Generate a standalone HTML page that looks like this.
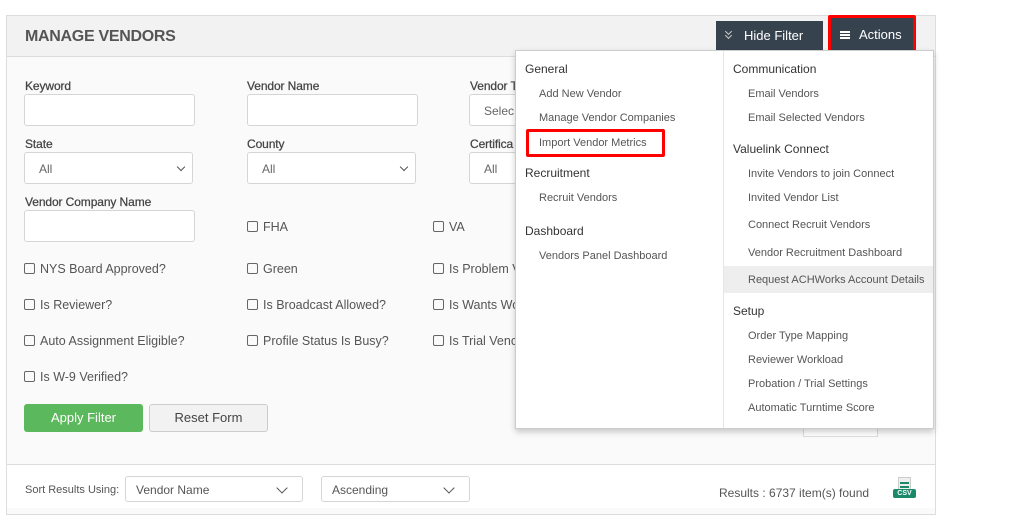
<!DOCTYPE html>
<html><head><meta charset="utf-8"><style>
*{box-sizing:border-box;margin:0;padding:0}
body{width:1024px;height:508px;background:#fff;font-family:"Liberation Sans",sans-serif;position:relative;overflow:hidden;color:#555}
.a{position:absolute;white-space:nowrap}
.lbl{font-size:12px;color:#444;letter-spacing:-0.1px;-webkit-text-stroke:0.25px #444}
.inp{position:absolute;border:1px solid #d5d5d5;border-radius:3px;background:#fff;height:32px}
.sel{font-size:12px;color:#666;padding:9px 14px}
.chev{position:absolute;right:8px;top:11px;width:6px;height:6px;border-right:1.5px solid #555;border-bottom:1.5px solid #555;transform:rotate(45deg)}
.cb{font-size:12.5px;color:#555}
.cb i{display:inline-block;width:11px;height:11px;border:1px solid #666;border-radius:2px;vertical-align:-1px;margin-right:5px}
.mh{font-size:12px;color:#333}
.mi{font-size:11px;color:#555}
</style></head><body>
<div class="a" style="left:6px;top:15px;width:930px;height:500px;border:1px solid #ddd;background:#fafafa"></div>
<div class="a" style="left:7px;top:16px;width:928px;height:41px;background:#f2f2f2;border-bottom:1px solid #ddd"></div>
<div class="a" style="left:25px;top:28px;font-size:16px;color:#555;font-weight:bold;letter-spacing:-0.3px">MANAGE VENDORS</div>

<div class="a lbl" style="left:25px;top:79px">Keyword</div>
<div class="inp" style="left:24px;top:94px;width:171px"></div>
<div class="a lbl" style="left:247px;top:79px">Vendor Name</div>
<div class="inp" style="left:247px;top:94px;width:171px"></div>
<div class="a lbl" style="left:470px;top:79px">Vendor T</div>
<div class="inp sel" style="left:469px;top:94px;width:60px;padding-left:14px">Selec</div>

<div class="a lbl" style="left:25px;top:137px">State</div>
<div class="inp sel" style="left:24px;top:152px;width:169px">All<span class="chev"></span></div>
<div class="a lbl" style="left:247px;top:137px">County</div>
<div class="inp sel" style="left:247px;top:152px;width:169px">All<span class="chev"></span></div>
<div class="a lbl" style="left:470px;top:137px">Certifica</div>
<div class="inp sel" style="left:469px;top:152px;width:60px">All</div>

<div class="a lbl" style="left:25px;top:195px">Vendor Company Name</div>
<div class="inp" style="left:24px;top:210px;width:171px"></div>
<div class="a cb" style="left:247px;top:220px"><i></i>FHA</div>
<div class="a cb" style="left:433px;top:220px"><i></i>VA</div>

<div class="a cb" style="left:24px;top:262px"><i></i>NYS Board Approved?</div>
<div class="a cb" style="left:247px;top:262px"><i></i>Green</div>
<div class="a cb" style="left:433px;top:262px"><i></i>Is Problem V</div>
<div class="a cb" style="left:24px;top:298px"><i></i>Is Reviewer?</div>
<div class="a cb" style="left:247px;top:298px"><i></i>Is Broadcast Allowed?</div>
<div class="a cb" style="left:433px;top:298px"><i></i>Is Wants Wo</div>
<div class="a cb" style="left:24px;top:334px"><i></i>Auto Assignment Eligible?</div>
<div class="a cb" style="left:247px;top:334px"><i></i>Profile Status Is Busy?</div>
<div class="a cb" style="left:433px;top:334px"><i></i>Is Trial Venc</div>
<div class="a cb" style="left:24px;top:370px"><i></i>Is W-9 Verified?</div>

<div class="a" style="left:24px;top:404px;width:119px;height:28px;background:#5cb85c;border-radius:3px;color:#fff;font-size:13px;text-align:center;line-height:28px">Apply Filter</div>
<div class="a" style="left:149px;top:404px;width:119px;height:28px;background:#f2f2f2;border:1px solid #ccc;border-radius:3px;color:#444;font-size:13px;text-align:center;line-height:26px">Reset Form</div>
<div class="a" style="left:803px;top:420px;width:75px;height:17px;border:1px solid #ddd;background:#fff"></div>

<div class="a" style="left:7px;top:464px;width:928px;height:44px;background:#fff;border-top:1px solid #ddd"></div>
<div class="a" style="left:25px;top:484px;font-size:11px;color:#555">Sort Results Using:</div>
<div class="inp" style="left:125px;top:476px;width:178px;height:26px;font-size:12px;padding:6px 10px">Vendor Name<span class="chev" style="right:16px;top:7px;width:8px;height:8px;border-width:1.3px"></span></div>
<div class="inp" style="left:321px;top:476px;width:149px;height:26px;font-size:12px;padding:6px 10px">Ascending<span class="chev" style="right:16px;top:7px;width:8px;height:8px;border-width:1.3px"></span></div>
<div class="a" style="left:719px;top:486px;font-size:12px;color:#555">Results : 6737 item(s) found</div>
<div class="a" style="left:893px;top:477px;width:23px;height:22px">
<div style="position:absolute;left:5px;top:0;width:13px;height:14px;background:#eee;border:1px solid #ccc"></div>
<div style="position:absolute;left:7px;top:5px;width:9px;height:2px;background:#1a8a6a"></div>
<div style="position:absolute;left:7px;top:9px;width:9px;height:2px;background:#1a8a6a"></div>
<div style="position:absolute;left:0;top:12px;width:23px;height:9px;background:#1a8a6a;border-radius:2px;color:#fff;font-size:7px;font-weight:bold;text-align:center;line-height:9px">CSV</div></div>

<div class="a" style="left:716px;top:21px;width:107px;height:30px;background:#37424f;color:#fff;font-size:13px;line-height:30px;padding-left:28px">Hide Filter</div>
<div class="a" style="left:726px;top:29px;width:5px;height:5px;border-right:1.5px solid #ccc;border-bottom:1.5px solid #ccc;transform:rotate(45deg)"></div>
<div class="a" style="left:726px;top:33px;width:5px;height:5px;border-right:1.5px solid #ccc;border-bottom:1.5px solid #ccc;transform:rotate(45deg)"></div>
<div class="a" style="left:828px;top:15px;width:88px;height:38px;background:#37424f;border:3px solid #f00;border-radius:2px;color:#fff;font-size:13px;line-height:34px;padding-left:28px">Actions</div>
<div class="a" style="left:840px;top:31px;width:10px;height:2px;background:#fff;box-shadow:0 3px 0 #fff,0 6px 0 #fff"></div>

<div class="a" style="left:515px;top:50px;width:419px;height:379px;background:#fff;border:1px solid #ccc;box-shadow:0 3px 6px rgba(0,0,0,.2)"></div>
<div class="a" style="left:723px;top:51px;width:1px;height:377px;background:#e5e5e5"></div>
<div class="a" style="left:724px;top:266px;width:209px;height:27px;background:#eee"></div>
<div class="a mh" style="left:525px;top:62px">General</div>
<div class="a mi" style="left:539px;top:88px">Add New Vendor</div>
<div class="a mi" style="left:539px;top:112px">Manage Vendor Companies</div>
<div class="a" style="left:526px;top:129px;width:139px;height:28px;border:3px solid #f00;border-radius:2px"></div>
<div class="a mi" style="left:539px;top:137px">Import Vendor Metrics</div>
<div class="a mh" style="left:525px;top:166px">Recruitment</div>
<div class="a mi" style="left:539px;top:192px">Recruit Vendors</div>
<div class="a mh" style="left:525px;top:224px">Dashboard</div>
<div class="a mi" style="left:539px;top:250px">Vendors Panel Dashboard</div>

<div class="a mh" style="left:733px;top:62px">Communication</div>
<div class="a mi" style="left:748px;top:88px">Email Vendors</div>
<div class="a mi" style="left:748px;top:112px">Email Selected Vendors</div>
<div class="a mh" style="left:733px;top:142px">Valuelink Connect</div>
<div class="a mi" style="left:748px;top:168px">Invite Vendors to join Connect</div>
<div class="a mi" style="left:748px;top:192px">Invited Vendor List</div>
<div class="a mi" style="left:748px;top:219px">Connect Recruit Vendors</div>
<div class="a mi" style="left:748px;top:247px">Vendor Recruitment Dashboard</div>
<div class="a mi" style="left:748px;top:274px">Request ACHWorks Account Details</div>
<div class="a mh" style="left:733px;top:304px">Setup</div>
<div class="a mi" style="left:748px;top:330px">Order Type Mapping</div>
<div class="a mi" style="left:748px;top:354px">Reviewer Workload</div>
<div class="a mi" style="left:748px;top:378px">Probation / Trial Settings</div>
<div class="a mi" style="left:748px;top:402px">Automatic Turntime Score</div>
</body></html>
